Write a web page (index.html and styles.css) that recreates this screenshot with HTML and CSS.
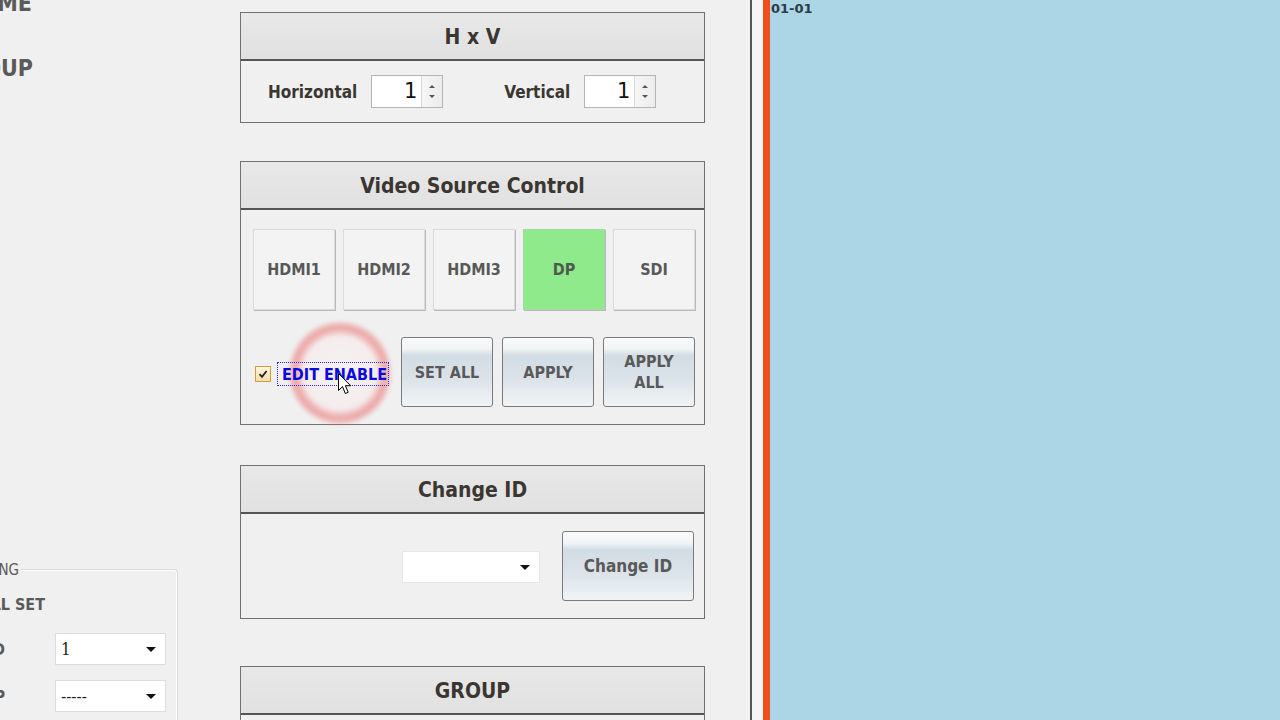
FILE: index.html
```html
<!DOCTYPE html>
<html lang="en">
<head>
  <meta charset="UTF-8">
  <title>Wall Controller</title>
  <link rel="stylesheet" href="styles.css">
</head>
<body>
  <div class="side">
    <div class="side-title first"><span>NAME</span></div>
    <div class="side-title"><span>GROUP</span></div>

    <div class="groupbox">
      <div class="groupbox-legend"><span>SETTING</span></div>
      <div class="groupbox-head"><span>ALL SET</span></div>
      <div class="side-row">
        <div class="side-label"><span>ID</span></div>
        <div class="combo side-combo"><span>1</span><i class="caret"></i></div>
      </div>
      <div class="side-row">
        <div class="side-label"><span>GROUP</span></div>
        <div class="combo side-combo"><span>-----</span><i class="caret"></i></div>
      </div>
    </div>
  </div>

  <div class="main">
    <!-- H x V -->
    <section class="panel panel-hv">
      <div class="panel-head">H x V</div>
      <div class="panel-body hv-body">
        <label class="field-label">Horizontal</label>
        <div class="spin">
          <span class="spin-value">1</span>
          <span class="spin-btns"><i class="up"></i><i class="down"></i></span>
        </div>
        <label class="field-label vert">Vertical</label>
        <div class="spin">
          <span class="spin-value">1</span>
          <span class="spin-btns"><i class="up"></i><i class="down"></i></span>
        </div>
      </div>
    </section>

    <!-- Video Source Control -->
    <section class="panel panel-vsc">
      <div class="panel-head">Video Source Control</div>
      <div class="panel-body vsc-body">
        <div class="sources">
          <button class="src">HDMI1</button>
          <button class="src">HDMI2</button>
          <button class="src">HDMI3</button>
          <button class="src active">DP</button>
          <button class="src">SDI</button>
        </div>
        <div class="actions">
          <div class="click-ring"></div>
          <label class="edit">
            <span class="check"><svg viewBox="0 0 10 10" width="10" height="10"><path d="M1.5 5.2 L4 7.8 L8.6 2" fill="none" stroke="#222" stroke-width="1.8"/></svg></span>
            <span class="edit-text">EDIT ENABLE</span>
          </label>
          <button class="act">SET ALL</button>
          <button class="act">APPLY</button>
          <button class="act">APPLY<br>ALL</button>

          <svg class="pointer" viewBox="0 0 14 22" width="14" height="22">
            <path d="M0.5 0.5 L0.5 17.5 L4.5 13.6 L7.3 20.5 L10.2 19.3 L7.4 12.7 L12.8 12.7 Z" fill="#fff" stroke="#000" stroke-width="1"/>
          </svg>
        </div>
      </div>
    </section>

    <!-- Change ID -->
    <section class="panel panel-id">
      <div class="panel-head">Change ID</div>
      <div class="panel-body id-body">
        <div class="combo id-combo"><span></span><i class="caret"></i></div>
        <button class="act id-btn">Change ID</button>
      </div>
    </section>

    <!-- GROUP -->
    <section class="panel panel-group">
      <div class="panel-head">GROUP</div>
      <div class="panel-body group-body"></div>
    </section>
  </div>

  <div class="gutter"></div>
  <div class="divider"></div>
  <div class="strip"></div>
  <div class="marker"></div>
  <div class="canvas">
    <span class="cell-id">01-01</span>
  </div>
</body>
</html>
```

FILE: styles.css
```css
* {
  box-sizing: border-box;
}
html, body {
  height: 100%;
}
body {
  margin: 0;
  display: flex;
  overflow: hidden;
  background: #f0f0f0;
  color: #3a3632;
  font-family: "DejaVu Sans Condensed", "DejaVu Sans", sans-serif;
  font-stretch: condensed;
}
button {
  font-family: inherit;
  font-stretch: condensed;
}

/* left column, scrolled partly out of view */
.side {
  width: 240px;
  flex: none;
  position: relative;
}
.side-title {
  width: 33px;
  height: 22px;
  display: flex;
  justify-content: flex-end;
  white-space: nowrap;
  font-size: 23px;
  font-weight: bold;
  color: #5a5a5a;
  line-height: 22px;
  margin-top: 43px;
}
.side-title.first {
  width: 32px;
  margin-top: -8px;
}
.groupbox {
  margin-top: 490px;
  width: 178px;
  height: 200px;
  border: 1px solid #dadada;
  border-left: none;
  border-radius: 0 4px 0 0;
  box-shadow: inset -1px 1px 0 #fff;
  position: relative;
}
.groupbox-legend {
  position: absolute;
  top: -9px;
  left: 0;
  width: 21px;
  display: flex;
  justify-content: flex-end;
  white-space: nowrap;
  background: #f0f0f0;
  padding-right: 2px;
  font-size: 15px;
  line-height: 18px;
  color: #5a5a5a;
}
.groupbox-head {
  width: 45px;
  display: flex;
  justify-content: flex-end;
  white-space: nowrap;
  font-size: 16px;
  font-weight: bold;
  color: #5a5a5a;
  margin-top: 25px;
}
.side-row {
  display: flex;
  align-items: center;
  margin-top: 19px;
}
.side-row + .side-row {
  margin-top: 15px;
}
.side-label {
  width: 5px;
  display: flex;
  justify-content: flex-end;
  white-space: nowrap;
  font-size: 16px;
  font-weight: bold;
  color: #5a5a5a;
}
.side-combo {
  margin-left: 50px;
  width: 111px;
  height: 32px;
  border: 1px solid #dcdcdc;
  font-size: 17px;
  color: #222;
  font-family: "DejaVu Serif", serif;
}

.combo {
  display: flex;
  align-items: center;
  justify-content: space-between;
  padding: 0 9px 0 5px;
  background: #fff;
}
.caret {
  width: 0;
  height: 0;
  border-left: 5px solid transparent;
  border-right: 5px solid transparent;
  border-top: 5px solid #111;
}

/* panel column */
.main {
  width: 465px;
  flex: none;
  padding-top: 12px;
}
.panel {
  border: 1px solid #717171;
  background: #f0f0f0;
}
.panel-head {
  height: 48px;
  border-bottom: 2px solid #555;
  background: linear-gradient(#e8e8e8, #e1e1e1);
  display: flex;
  align-items: center;
  justify-content: center;
  font-size: 21px;
  font-weight: bold;
  color: #3b3631;
  padding-top: 2px;
}
.panel-vsc {
  margin-top: 38px;
}
.panel-id {
  margin-top: 40px;
}
.panel-group {
  margin-top: 47px;
}

/* H x V */
.hv-body {
  height: 61px;
  display: flex;
  align-items: center;
  padding-left: 27px;
}
.field-label {
  font-size: 17px;
  font-weight: bold;
  color: #3b3631;
  margin-right: 14px;
}
.field-label.vert {
  margin-left: 61px;
}
.spin {
  display: flex;
  width: 72px;
  height: 33px;
  border: 1px solid #b4b4b4;
  background: #fff;
}
.spin-value {
  flex: 1;
  text-align: right;
  padding-right: 4px;
  font-family: "DejaVu Sans", sans-serif;
  font-stretch: normal;
  font-size: 21px;
  line-height: 31px;
  color: #111;
}
.spin-btns {
  width: 21px;
  border-left: 1px solid #d8d8d8;
  background: linear-gradient(90deg, #f6f6f6, #ececec);
  display: flex;
  flex-direction: column;
  align-items: center;
  justify-content: center;
  gap: 7px;
}
.spin-btns i {
  width: 0;
  height: 0;
  border-left: 3px solid transparent;
  border-right: 3px solid transparent;
}
.spin-btns .up {
  border-bottom: 3px solid #555;
}
.spin-btns .down {
  border-top: 3px solid #555;
}

/* Video Source Control */
.vsc-body {
  padding: 19px 9px 17px 12px;
}
.sources {
  display: flex;
  gap: 8px;
}
.src {
  width: 82px;
  height: 81px;
  padding: 0;
  background: #f3f3f3;
  border: 1px solid #dadada;
  box-shadow: 1px 1px 0 #b9b9b9;
  font-size: 16px;
  font-weight: bold;
  color: #585858;
}
.src.active {
  background: #8eea8a;
  border-color: #a6d8a2;
  color: #4e5a4e;
}
.actions {
  position: relative;
  display: flex;
  align-items: center;
  margin-top: 27px;
  height: 70px;
}
.edit {
  position: relative;
  display: flex;
  align-items: center;
  width: 148px;
  padding-left: 2px;
  padding-top: 3px;
}
.check {
  width: 16px;
  height: 16px;
  border: 1px solid #d49a3c;
  background: linear-gradient(#fff6dc, #f7deaa);
  display: flex;
  align-items: center;
  justify-content: center;
}
.edit-text {
  margin-left: 6px;
  padding: 2px 1px 1px 4px;
  border: 1px dotted #2a2ad0;
  font-size: 16px;
  font-weight: bold;
  color: #0a0ae0;
  white-space: nowrap;
}
.act {
  width: 92px;
  height: 70px;
  margin-right: 9px;
  padding: 0;
  border: 1px solid #7a7a7a;
  border-radius: 3px;
  background: linear-gradient(#f9fafb 0%, #f1f4f6 16%, #d2dce4 26%, #dbe3e9 60%, #f1f4f6 100%);
  font-size: 16px;
  font-weight: bold;
  line-height: 21px;
  color: #595959;
}
.act:last-of-type {
  margin-right: 0;
}

/* click highlight and mouse pointer */
.click-ring {
  position: absolute;
  left: 34px;
  top: -17px;
  width: 106px;
  height: 106px;
  border-radius: 50%;
  background: radial-gradient(circle, rgba(255, 238, 238, 0.3) 0, rgba(255, 232, 232, 0.35) 36px, rgba(236, 118, 118, 0.55) 44px, rgba(236, 118, 118, 0.55) 47px, rgba(236, 120, 120, 0) 53px);
  filter: blur(1.5px);
  pointer-events: none;
}
.pointer {
  position: absolute;
  left: 85px;
  top: 36px;
}

/* Change ID */
.id-body {
  height: 104px;
  display: flex;
  align-items: center;
  justify-content: flex-end;
  padding-right: 10px;
}
.id-combo {
  width: 138px;
  height: 32px;
  border: 1px solid #e6e6e6;
  margin-right: 22px;
  margin-top: 2px;
}
.id-btn {
  width: 132px;
  margin-right: 0;
  font-size: 17px;
}

.group-body {
  height: 40px;
}

/* preview area on the right */
.gutter {
  width: 45px;
  flex: none;
}
.divider {
  width: 2px;
  flex: none;
  background: #555;
}
.strip {
  width: 11px;
  flex: none;
  background: #f5f5f5;
}
.marker {
  width: 7px;
  flex: none;
  background: #f04e1c;
}
.canvas {
  flex: 1;
  background: #acd6e6;
  padding-left: 1px;
  line-height: 16px;
}
.cell-id {
  font-size: 13px;
  font-stretch: normal;
  font-family: "DejaVu Sans", sans-serif;
  font-weight: bold;
  color: #2c3a48;
}
```
